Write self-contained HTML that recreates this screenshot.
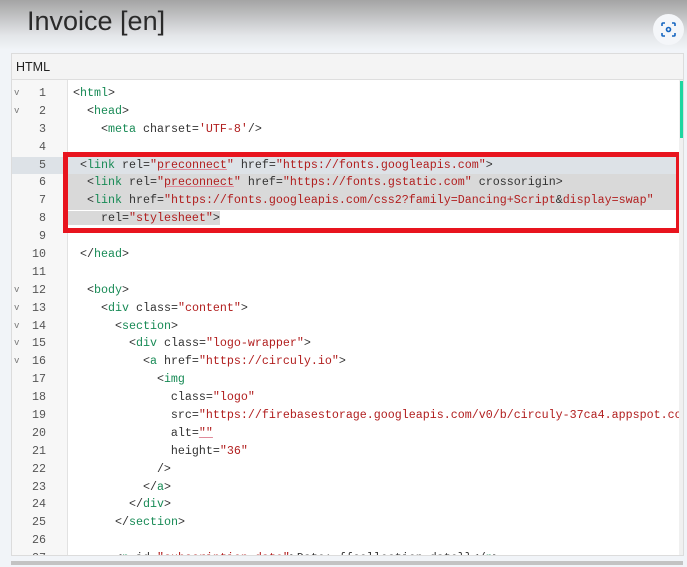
<!DOCTYPE html>
<html><head><meta charset="utf-8"><style>
body{margin:0;width:687px;height:567px;overflow:hidden;background:#f1f4f8;font-family:"Liberation Sans",sans-serif;position:relative}
.top{position:absolute;left:0;top:0;width:687px;height:50px;background:linear-gradient(#a4a4a4,#e3e5e8 70%,#f1f4f8)}
h1{position:absolute;left:27px;top:6px;margin:0;font-weight:normal;font-size:27px;color:#2a2a2a}
.btn{position:absolute;left:653px;top:14px;width:31px;height:31px;border-radius:50%;background:#f4f6f9}
.panel{position:absolute;left:11px;top:53px;width:671px;height:501px;border:1px solid #dcdcdc;background:#fff;overflow:hidden}
.hdr{height:25px;background:#f4f4f4;border-bottom:1px solid #dedede;font-size:12.5px;color:#222;line-height:26px;padding-left:4px}
.gut{position:absolute;left:0;top:26px;width:55px;bottom:0;background:#f7f7f7;border-right:1px solid #e2e2e2}
.code{position:absolute;left:0;top:31px;right:0;font-family:"Liberation Mono",monospace;font-size:11.67px;line-height:17.9px;color:#333}
.ln{position:relative;height:17.9px;white-space:pre}
.ln .n{position:absolute;left:0;width:34px;text-align:right;color:#555}
.ln .f{position:absolute;left:2px;color:#777;font-size:9px}
.ln .c{position:absolute;left:61px}
.t{color:#178a55}.s{color:#b11e1e}
.u{text-decoration:underline;text-decoration-color:#e08a9a}
.hl5{background:#dde2e7}.hl{background:#d9d9d9}
.red{position:absolute;left:51px;top:98px;width:608px;height:71px;border:5px solid #e8141e}
.sb{position:absolute;left:667px;top:26px;width:5px;bottom:0;background:#f0f0f0}
.sbt{position:absolute;left:668px;top:27px;width:3px;height:57px;background:#1ed6a0}
.hs{position:absolute;left:11px;top:561px;width:672px;height:4px;background:#c3c3c3}
</style></head><body>
<div class="top"></div>
<h1>Invoice [en]</h1>
<div class="btn"><svg width="31" height="31" viewBox="0 0 31 31" fill="none" stroke="#1565c0" stroke-width="1.6"><path d="M9 12V10a1 1 0 0 1 1-1h2M19 9h2a1 1 0 0 1 1 1v2M22 19v2a1 1 0 0 1-1 1h-2M12 22h-2a1 1 0 0 1-1-1v-2"/><circle cx="15.5" cy="15.5" r="2"/></svg></div>
<div class="panel">
<div class="hdr">HTML</div>
<div class="gut"></div>
<div class="code">
<div class="ln"><span class="f">v</span><span class="n">1</span><span class="c">&lt;<span class="t">html</span>&gt;</span></div>
<div class="ln"><span class="f">v</span><span class="n">2</span><span class="c">  &lt;<span class="t">head</span>&gt;</span></div>
<div class="ln"><span class="n">3</span><span class="c">    &lt;<span class="t">meta</span> charset=<span class="s">'UTF-8'</span>/&gt;</span></div>
<div class="ln"><span class="n">4</span><span class="c"> </span></div>
<div class="ln hl5"><span class="n" style="background:#e6f0fa;width:55px;left:0;padding-right:0"><span style="position:absolute;right:21px">5</span></span><span class="c hl5" style="left:55px;right:0"><span style="padding-left:6px"> &lt;<span class="t">link</span> rel=<span class="s">"<span class="u">preconnect</span>"</span> href=<span class="s">"https://fonts.googleapis.com"</span>&gt;</span></span></div>
<div class="ln"><span class="n">6</span><span class="c hl" style="left:55px;right:0"><span style="padding-left:6px">  &lt;<span class="t">link</span> rel=<span class="s">"<span class="u">preconnect</span>"</span> href=<span class="s">"https://fonts.gstatic.com"</span> crossorigin&gt;</span></span></div>
<div class="ln"><span class="n">7</span><span class="c hl" style="left:55px;right:0"><span style="padding-left:6px">  &lt;<span class="t">link</span> href=<span class="s">"https://fonts.googleapis.com/css2?family=Dancing+Script</span>&amp;<span class="s">display=swap"</span></span></span></div>
<div class="ln"><span class="n">8</span><span class="c" style="left:55px;right:0"><span class="hl" style="padding-left:6px">    rel=<span class="s">"stylesheet"</span>&gt;</span></span></div>
<div class="ln"><span class="n">9</span></div>
<div class="ln"><span class="n">10</span><span class="c"> &lt;/<span class="t">head</span>&gt;</span></div>
<div class="ln"><span class="n">11</span></div>
<div class="ln"><span class="f">v</span><span class="n">12</span><span class="c">  &lt;<span class="t">body</span>&gt;</span></div>
<div class="ln"><span class="f">v</span><span class="n">13</span><span class="c">    &lt;<span class="t">div</span> class=<span class="s">"content"</span>&gt;</span></div>
<div class="ln"><span class="f">v</span><span class="n">14</span><span class="c">      &lt;<span class="t">section</span>&gt;</span></div>
<div class="ln"><span class="f">v</span><span class="n">15</span><span class="c">        &lt;<span class="t">div</span> class=<span class="s">"logo-wrapper"</span>&gt;</span></div>
<div class="ln"><span class="f">v</span><span class="n">16</span><span class="c">          &lt;<span class="t">a</span> href=<span class="s">"https://circuly.io"</span>&gt;</span></div>
<div class="ln"><span class="n">17</span><span class="c">            &lt;<span class="t">img</span></span></div>
<div class="ln"><span class="n">18</span><span class="c">              class=<span class="s">"logo"</span></span></div>
<div class="ln"><span class="n">19</span><span class="c">              src=<span class="s">"https://firebasestorage.googleapis.com/v0/b/circuly-37ca4.appspot.com</span></span></div>
<div class="ln"><span class="n">20</span><span class="c">              alt=<span class="s u">""</span></span></div>
<div class="ln"><span class="n">21</span><span class="c">              height=<span class="s">"36"</span></span></div>
<div class="ln"><span class="n">22</span><span class="c">            /&gt;</span></div>
<div class="ln"><span class="n">23</span><span class="c">          &lt;/<span class="t">a</span>&gt;</span></div>
<div class="ln"><span class="n">24</span><span class="c">        &lt;/<span class="t">div</span>&gt;</span></div>
<div class="ln"><span class="n">25</span><span class="c">      &lt;/<span class="t">section</span>&gt;</span></div>
<div class="ln"><span class="n">26</span></div>
<div class="ln"><span class="n">27</span><span class="c">      &lt;<span class="t">p</span> id=<span class="s">"subscription-date"</span>&gt;Date: {{collection.date}}&lt;/<span class="t">p</span>&gt;</span></div>
</div>
<div class="red"></div>
<div class="sb"></div><div class="sbt"></div>
</div>
<div class="hs"></div>
</body></html>
